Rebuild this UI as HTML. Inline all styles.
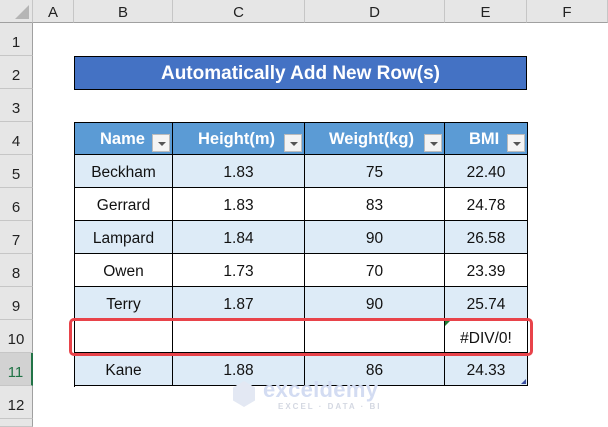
<!DOCTYPE html>
<html><head><meta charset="utf-8"><style>
*{margin:0;padding:0;box-sizing:border-box}
html,body{width:608px;height:427px;overflow:hidden}
body{background:#fff;font-family:"Liberation Sans",sans-serif;position:relative}
.a{position:absolute}
.ch{top:0;height:23px;background:#e6e6e6;border-right:1px solid #c6c6c6;border-bottom:1px solid #a0a0a0;font-size:15px;color:#222;text-align:center;line-height:25px}
.rh{left:0;width:33px;height:33px;background:#e6e6e6;border-bottom:1px solid #c6c6c6;border-right:1px solid #a0a0a0;font-size:15px;color:#222;text-align:center;line-height:40px}
.c{border-right:1px solid #000;border-bottom:1px solid #000;font-size:15.5px;color:#111;text-align:center;line-height:35px;height:33px}
.h{background:#5b9bd5;color:#fff;font-weight:bold;font-size:16.5px;text-align:left;line-height:33px}
.band{background:#ddebf7}
.fb{position:absolute;width:18px;height:18px;background:#f4f4f4;border:1px solid #bbb;bottom:2px;right:2px}
.fb:after{content:"";position:absolute;left:5px;top:7px;border-left:4px solid transparent;border-right:4px solid transparent;border-top:4px solid #555}
</style></head><body>
<div class="a ch" style="left:0;width:33px;"><div style="position:absolute;right:3px;bottom:3px;width:0;height:0;border-left:14px solid transparent;border-bottom:14px solid #b5b5b5"></div></div>
<div class="a ch" style="left:33px;width:41px">A</div>
<div class="a ch" style="left:74px;width:99px">B</div>
<div class="a ch" style="left:173px;width:132px">C</div>
<div class="a ch" style="left:305px;width:140px">D</div>
<div class="a ch" style="left:445px;width:82px">E</div>
<div class="a ch" style="left:527px;width:81px">F</div>

<div class="a rh" style="top:23px">1</div>
<div class="a rh" style="top:56px">2</div>
<div class="a rh" style="top:89px">3</div>
<div class="a rh" style="top:122px">4</div>
<div class="a rh" style="top:155px">5</div>
<div class="a rh" style="top:188px">6</div>
<div class="a rh" style="top:221px">7</div>
<div class="a rh" style="top:254px">8</div>
<div class="a rh" style="top:287px">9</div>
<div class="a rh" style="top:320px">10</div>
<div class="a rh" style="top:353px;background:#d2d2d2;color:#217346;border-right:2px solid #217346">11</div>
<div class="a rh" style="top:386px">12</div>
<div class="a rh" style="top:419px;height:8px"></div>

<div class="a" style="left:74px;top:56px;width:453px;height:34px;background:#4472c4;border:1px solid #000;color:#fff;font-weight:bold;font-size:19px;text-align:center;line-height:34px">Automatically Add New Row(s)</div>

<div class="a" style="left:74px;top:122px;width:454px;height:265px;border-left:1px solid #000;border-top:1px solid #000"></div>
<div class="a c h" style="left:75px;top:123px;width:98px;height:32px;padding-left:25px">Name<div class="fb"></div></div>
<div class="a c h" style="left:173px;top:123px;width:132px;height:32px;padding-left:25px">Height(m)<div class="fb"></div></div>
<div class="a c h" style="left:305px;top:123px;width:140px;height:32px;padding-left:24px">Weight(kg)<div class="fb"></div></div>
<div class="a c h" style="left:445px;top:123px;width:83px;height:32px;padding-left:24px">BMI<div class="fb"></div></div>

<div class="a c band" style="left:75px;top:155px;width:98px">Beckham</div><div class="a c band" style="left:173px;top:155px;width:132px">1.83</div><div class="a c band" style="left:305px;top:155px;width:140px">75</div><div class="a c band" style="left:445px;top:155px;width:83px">22.40</div>
<div class="a c" style="left:75px;top:188px;width:98px">Gerrard</div><div class="a c" style="left:173px;top:188px;width:132px">1.83</div><div class="a c" style="left:305px;top:188px;width:140px">83</div><div class="a c" style="left:445px;top:188px;width:83px">24.78</div>
<div class="a c band" style="left:75px;top:221px;width:98px">Lampard</div><div class="a c band" style="left:173px;top:221px;width:132px">1.84</div><div class="a c band" style="left:305px;top:221px;width:140px">90</div><div class="a c band" style="left:445px;top:221px;width:83px">26.58</div>
<div class="a c" style="left:75px;top:254px;width:98px">Owen</div><div class="a c" style="left:173px;top:254px;width:132px">1.73</div><div class="a c" style="left:305px;top:254px;width:140px">70</div><div class="a c" style="left:445px;top:254px;width:83px">23.39</div>
<div class="a c band" style="left:75px;top:287px;width:98px">Terry</div><div class="a c band" style="left:173px;top:287px;width:132px">1.87</div><div class="a c band" style="left:305px;top:287px;width:140px">90</div><div class="a c band" style="left:445px;top:287px;width:83px">25.74</div>
<div class="a c" style="left:75px;top:320px;width:98px"></div><div class="a c" style="left:173px;top:320px;width:132px"></div><div class="a c" style="left:305px;top:320px;width:140px"></div><div class="a c" style="left:445px;top:320px;width:83px;line-height:37px">#DIV/0!<div style="position:absolute;left:0;top:0;border-top:6px solid #1e7d32;border-right:6px solid transparent"></div></div>
<div class="a c band" style="left:75px;top:353px;width:98px">Kane</div><div class="a c band" style="left:173px;top:353px;width:132px">1.88</div><div class="a c band" style="left:305px;top:353px;width:140px">86</div><div class="a c band" style="left:445px;top:353px;width:83px">24.33<div style="position:absolute;right:1px;bottom:1px;border-bottom:5px solid #3a4fa0;border-left:5px solid transparent"></div></div>

<div class="a" style="left:69px;top:318px;width:464px;height:38px;border:3px solid #e8434a;border-radius:5px"></div>

<div class="a" style="left:233px;top:381px;width:22px;height:26px;background:#e3e8f3;clip-path:polygon(50% 0,100% 25%,100% 75%,50% 100%,0 75%,0 25%)"></div>
<div class="a" style="left:263px;top:377px;font-size:22px;font-weight:bold;color:#d3dcf2;letter-spacing:0.3px">exceldemy</div>
<div class="a" style="left:278px;top:402px;font-size:8px;color:#d4d8e2;letter-spacing:2px;font-weight:bold">EXCEL · DATA · BI</div>
</body></html>
